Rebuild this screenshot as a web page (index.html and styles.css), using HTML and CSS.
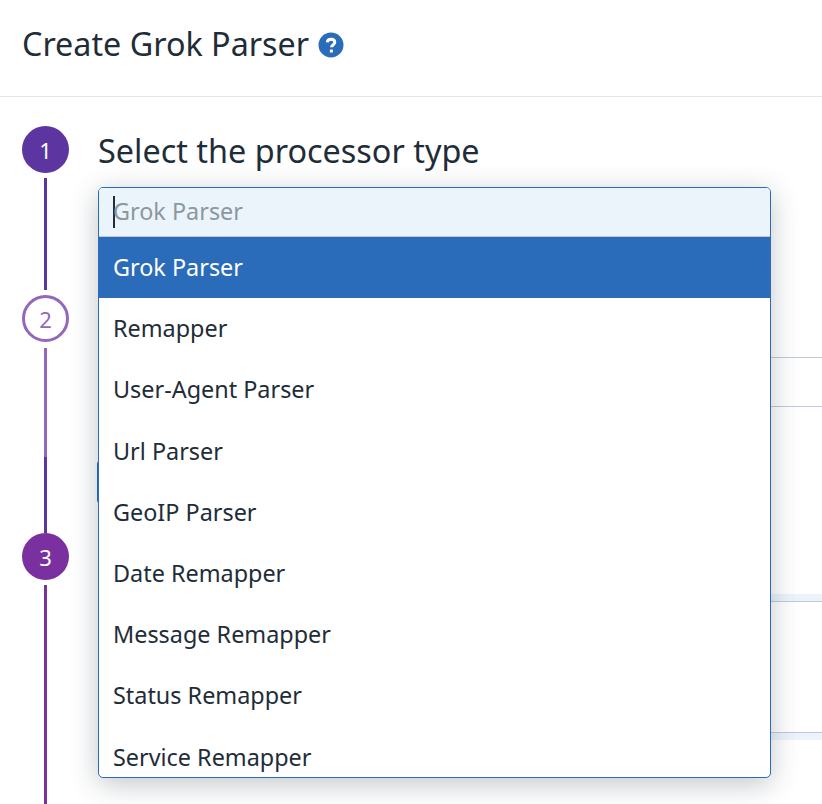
FILE: index.html
```html
<!DOCTYPE html>
<html lang="en">
<head>
<meta charset="UTF-8">
<meta name="viewport" content="width=device-width, initial-scale=1.0">
<title>Create Grok Parser</title>
<link rel="stylesheet" href="styles.css">
</head>
<body>
<header class="page-header">
  <h1>Create Grok Parser</h1>
  <svg class="help-icon" viewBox="0 0 26 26" width="26" height="26" aria-hidden="true">
    <circle cx="13" cy="13" r="12.5" fill="#2a6cb9"/>
    <path d="M9.300 10.300c.2-2 1.700-3.100 3.800-3.100 2.200 0 3.700 1.200 3.700 3 0 1.400-.8 2.100-1.800 2.800-1 .7-1.400 1.200-1.400 2.300" fill="none" stroke="#fff" stroke-width="3"/>
    <rect x="11.900" y="17.500" width="3" height="3" rx=".5" fill="#fff"/>
  </svg>
</header>

<main class="steps">
  <div class="rail">
    <div class="badge badge-one">1</div>
    <div class="line line-one"></div>
    <div class="badge badge-two">2</div>
    <div class="line line-two"></div>
    <div class="line line-two-end"></div>
    <div class="badge badge-three">3</div>
    <div class="line line-three"></div>
  </div>

  <div class="content">
    <h2>Select the processor type</h2>
    <div class="behind">
      <div class="rule rule-a"></div>
      <div class="rule rule-b"></div>
      <div class="ghost-button"></div>
      <div class="band band-a"></div>
      <div class="band band-b"></div>
    </div>

    <div class="dropdown">
      <div class="search">
        <span class="caret"></span>
        <span class="placeholder">Grok Parser</span>
      </div>
      <ul class="options">
        <li class="selected">Grok Parser</li>
        <li>Remapper</li>
        <li>User-Agent Parser</li>
        <li>Url Parser</li>
        <li>GeoIP Parser</li>
        <li>Date Remapper</li>
        <li>Message Remapper</li>
        <li>Status Remapper</li>
        <li>Service Remapper</li>
      </ul>
    </div>
  </div>
</main>
</body>
</html>
```

FILE: styles.css
```css
body {
  margin: 0;
  font-family: "Noto Sans", "Open Sans", sans-serif;
  background-color: #fff;
  color: #1f2d38;
}

.page-header {
  display: flex;
  align-items: center;
  gap: 9px;
  height: 96px;
  padding-left: 22px;
  border-bottom: 1px solid #e2e5ed;
}

.page-header h1 {
  margin: 0 0 11px;
  font-size: 32.300px;
  font-weight: 400;
  line-height: 44px;
}

.help-icon {
  margin-bottom: 7px;
}

.steps {
  display: flex;
  padding: 29px 0 0 22px;
}

.rail {
  display: flex;
  flex-direction: column;
  align-items: center;
  width: 47px;
  flex: none;
}

.badge {
  width: 47px;
  height: 47px;
  border-radius: 50%;
  box-sizing: border-box;
  display: flex;
  align-items: center;
  justify-content: center;
  font-size: 22px;
  color: #fff;
  flex: none;
}

.badge-one {
  background-color: #5c35a0;
}

.badge-two {
  background-color: #fff;
  border: 3px solid #9467bb;
  color: #9467bb;
}

.badge-three {
  background-color: #7b309f;
}

.line {
  width: 3px;
  flex: none;
}

.line-one {
  height: 112px;
  margin: 5px 0;
  background-color: #5c35a0;
}

.line-two {
  height: 109px;
  margin-top: 6px;
  background-color: #9467bb;
}

.line-two-end {
  height: 76px;
  background-color: #5c35a0;
}

.line-three {
  height: 219px;
  margin-top: 5px;
  background-color: #7b309f;
}

.content {
  position: relative;
  flex: 1;
  margin-left: 29px;
}

.content h2 {
  margin: 0;
  font-size: 32.400px;
  font-weight: 400;
  line-height: 48px;
}

.rule {
  height: 1px;
  background-color: #c3c8dc;
}

.rule-a {
  margin-top: 183px;
}

.rule-b {
  margin-top: 48px;
}

.ghost-button {
  width: 40px;
  height: 42px;
  margin: 54px 0 0 -1px;
  border-radius: 3px;
  background-color: #1f72cf;
}

.band {
  height: 7px;
  background-color: #ecf4fb;
}

.band-a {
  margin-top: 91px;
  border-bottom: 1px solid #c3c8dc;
}

.band-b {
  margin-top: 130px;
  border-top: 1px solid #c3c8dc;
}

/* sits over the step content */
.dropdown {
  position: absolute;
  top: 61px;
  left: 0;
  width: 673px;
  height: 591px;
  box-sizing: border-box;
  border: 1px solid #2a6cb9;
  border-radius: 5px;
  background-color: #fff;
  overflow: hidden;
  box-shadow: 0 6px 28px rgba(31, 45, 56, 0.28);
}

.search {
  display: flex;
  align-items: center;
  height: 48px;
  padding-left: 14px;
  background-color: #ecf4fb;
  border-bottom: 1px solid #c3c8dc;
  font-size: 23.400px;
  color: #8b989f;
}

.placeholder {
  margin: 0 0 3px -1px;
}

.caret {
  width: 2px;
  height: 32px;
  margin-right: -1px;
  background-color: #1f2d38;
}

.options {
  list-style: none;
  margin: 0;
  padding: 0;
}

.options li {
  height: 61.200px;
  line-height: 61.200px;
  padding-left: 14px;
  font-size: 23.400px;
}

.options .selected {
  background-color: #2a6cb9;
  color: #fff;
}
```
